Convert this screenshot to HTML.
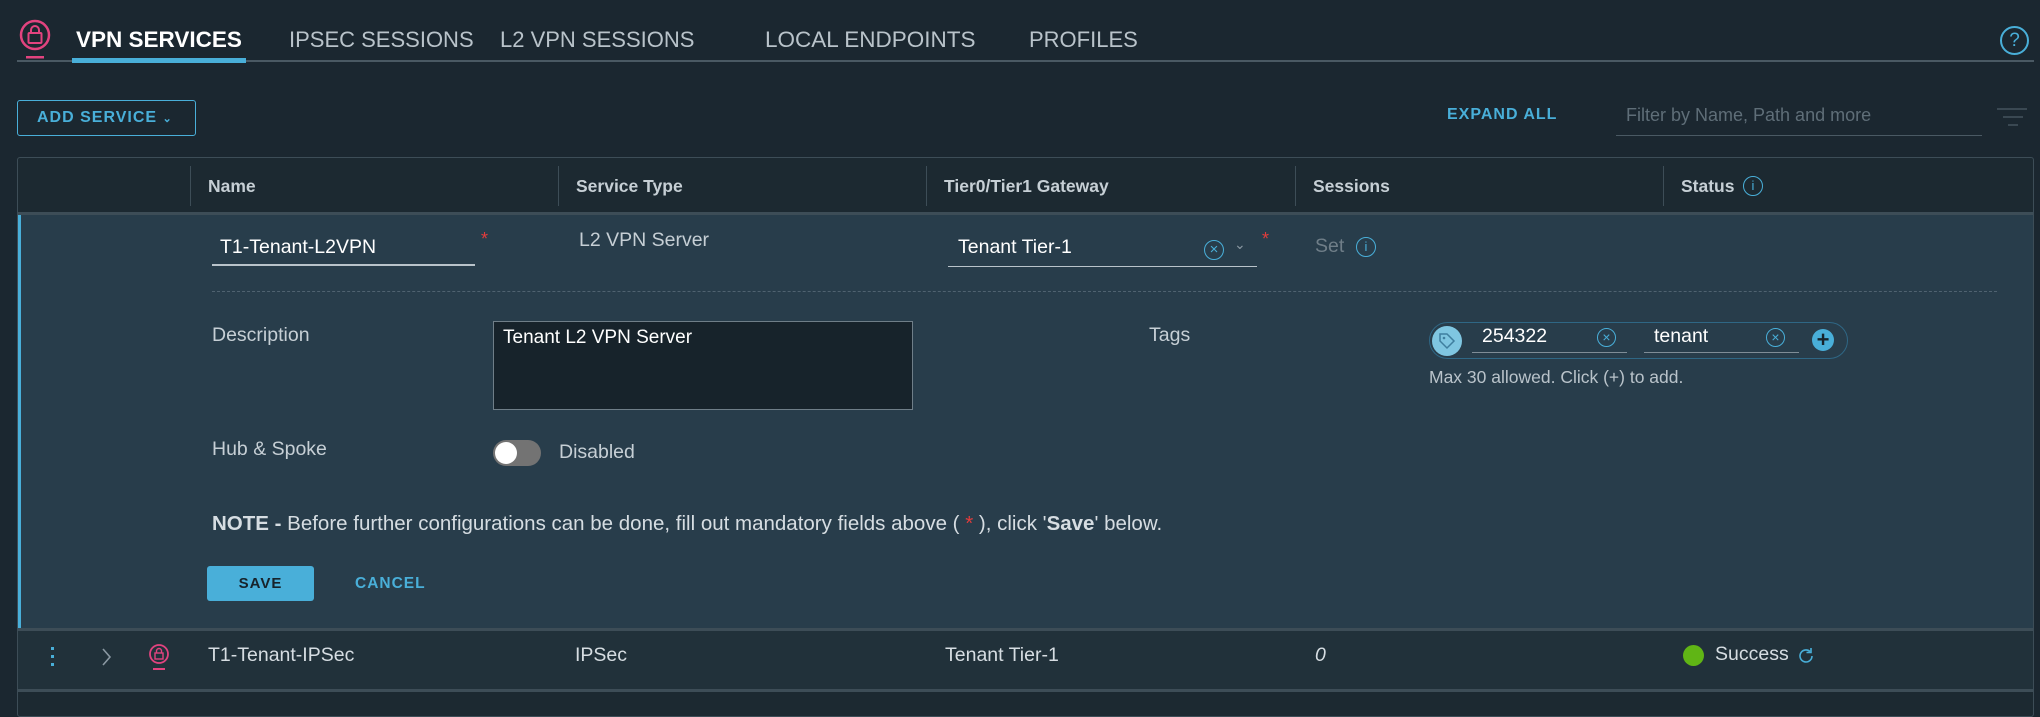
<!DOCTYPE html>
<html><head><meta charset="utf-8"><style>
*{box-sizing:border-box;margin:0;padding:0}
body{width:2040px;height:705px;background:#1b2730;font-family:"Liberation Sans",sans-serif;color:#d6dde2;position:relative;overflow:hidden}
.a{position:absolute;white-space:nowrap}
.tab{font-size:22px;color:#b9c3ca;top:27px}
.hd{font-size:17.5px;font-weight:bold;color:#c6cfd5;top:176px}
.t{font-size:19.5px}
.sep{position:absolute;top:166px;width:1px;height:40px;background:#3d4d57}
</style></head><body>
<svg class="a" style="left:18px;top:18px" width="34" height="44" viewBox="0 0 34 44"><circle cx="17" cy="17" r="14" fill="none" stroke="#e2437f" stroke-width="2.5"/><rect x="10.5" y="15" width="13" height="10" rx="1" fill="none" stroke="#e2437f" stroke-width="2"/><path d="M13 15v-3a4 4 0 0 1 8 0v3" fill="none" stroke="#e2437f" stroke-width="2"/><rect x="8" y="38" width="18" height="2.5" fill="#e2437f"/></svg>
<div class="a tab" style="left:76px;color:#fff;font-weight:bold;font-size:22.5px">VPN SERVICES</div>
<div class="a tab" style="left:289px">IPSEC SESSIONS</div>
<div class="a tab" style="left:500px">L2 VPN SESSIONS</div>
<div class="a tab" style="left:765px;font-size:22.5px">LOCAL ENDPOINTS</div>
<div class="a tab" style="left:1029px">PROFILES</div>
<div class="a" style="left:17px;top:60px;width:2017px;height:2px;background:#4a5963"></div>
<div class="a" style="left:72px;top:58px;width:174px;height:5px;background:#49afd9"></div>
<div class="a" style="left:2000px;top:26px;width:29px;height:29px;border:2px solid #49afd9;border-radius:50%;color:#49afd9;font-size:19px;text-align:center;line-height:25px">?</div>
<div class="a" style="left:17px;top:100px;width:179px;height:36px;border:1px solid #49afd9;border-radius:3px;color:#49afd9;font-size:16px;font-weight:bold;letter-spacing:1px;padding:8px 0 0 19px">ADD SERVICE <span style="font-size:11px">&#8964;</span></div>
<div class="a" style="left:1447px;top:106px;color:#49afd9;font-size:16px;font-weight:bold;letter-spacing:1px">EXPAND ALL</div>
<div class="a" style="left:1616px;top:105px;width:366px;height:31px;border-bottom:1px solid #4a5963;color:#5f6e78;font-size:18px;padding-left:10px">Filter by Name, Path and more</div>
<div class="a" style="left:1997px;top:108px;width:30px;height:2px;background:#3a4852"></div>
<div class="a" style="left:2003px;top:116px;width:20px;height:2px;background:#3a4852"></div>
<div class="a" style="left:2008px;top:124px;width:10px;height:2px;background:#3a4852"></div>
<div class="a" style="left:17px;top:157px;width:2017px;height:560px;border:1px solid #3d4d57;border-radius:3px;background:#1c2931"></div>
<div class="sep" style="left:190px"></div><div class="sep" style="left:558px"></div><div class="sep" style="left:926px"></div><div class="sep" style="left:1295px"></div><div class="sep" style="left:1663px"></div>
<div class="a hd" style="left:208px">Name</div>
<div class="a hd" style="left:576px">Service Type</div>
<div class="a hd" style="left:944px">Tier0/Tier1 Gateway</div>
<div class="a hd" style="left:1313px">Sessions</div>
<div class="a hd" style="left:1681px">Status</div>
<div class="a" style="left:1743px;top:176px;width:20px;height:20px;border:1.5px solid #49afd9;border-radius:50%;color:#49afd9;font-size:13px;text-align:center;line-height:17px">i</div>
<div class="a" style="left:18px;top:212px;width:2015px;height:3px;background:#3d4d57"></div>
<div class="a" style="left:18px;top:215px;width:2015px;height:413px;background:#283d4b;border-left:3px solid #49afd9"></div>
<div class="a t" style="left:212px;top:236px;width:263px;height:30px;border-bottom:2px solid #b9c3ca;color:#fff;padding-left:8px">T1-Tenant-L2VPN</div>
<div class="a" style="left:481px;top:229px;color:#e23c3c;font-size:18px">*</div>
<div class="a t" style="left:579px;top:229px;color:#c6cfd5">L2 VPN Server</div>
<div class="a t" style="left:948px;top:236px;width:309px;height:31px;border-bottom:1px solid #b9c3ca;color:#fff;padding-left:10px">Tenant Tier-1</div>
<div class="a" style="left:1204px;top:240px;width:20px;height:20px;border:1.5px solid #49afd9;border-radius:50%;color:#49afd9;font-size:15px;text-align:center;line-height:17px">×</div>
<div class="a" style="left:1234px;top:236px;color:#8a98a2;font-size:14px">&#8964;</div>
<div class="a" style="left:1262px;top:229px;color:#e23c3c;font-size:18px">*</div>
<div class="a t" style="left:1315px;top:235px;color:#6f7e88">Set</div>
<div class="a" style="left:1356px;top:237px;width:20px;height:20px;border:1.5px solid #49afd9;border-radius:50%;color:#49afd9;font-size:13px;text-align:center;line-height:17px">i</div>
<div class="a" style="left:212px;top:291px;width:1785px;border-top:1px dashed #4f6270"></div>
<div class="a t" style="left:212px;top:324px;color:#c6cfd5">Description</div>
<div class="a" style="left:493px;top:321px;width:420px;height:89px;background:#17232b;border:1px solid #6f7e88;color:#fff;padding:5px 9px;font-size:19px">Tenant L2 VPN Server</div>
<div class="a t" style="left:1149px;top:324px;color:#c6cfd5">Tags</div>
<div class="a" style="left:1429px;top:322px;width:419px;height:37px;border:1.5px solid #2f6785;border-radius:19px"></div>
<div class="a" style="left:1432px;top:326px;width:30px;height:30px;border-radius:50%;background:#7fc6e1"></div>
<svg class="a" style="left:1437px;top:331px" width="20" height="20" viewBox="0 0 20 20"><path d="M3 3h7l7 7-7 7-7-7z" fill="none" stroke="#3f7f9f" stroke-width="1.5"/><circle cx="7" cy="7" r="1.3" fill="#3f7f9f"/></svg>
<div class="a t" style="left:1472px;top:325px;width:155px;height:28px;border-bottom:1.5px solid #7f8d97;color:#fff;padding-left:10px">254322</div>
<div class="a" style="left:1597px;top:328px;width:19px;height:19px;border:1.5px solid #49afd9;border-radius:50%;color:#49afd9;font-size:14px;text-align:center;line-height:16px">×</div>
<div class="a t" style="left:1644px;top:325px;width:155px;height:28px;border-bottom:1.5px solid #7f8d97;color:#fff;padding-left:10px">tenant</div>
<div class="a" style="left:1766px;top:328px;width:19px;height:19px;border:1.5px solid #49afd9;border-radius:50%;color:#49afd9;font-size:14px;text-align:center;line-height:16px">×</div>
<div class="a" style="left:1812px;top:329px;width:22px;height:22px;border-radius:50%;background:#49afd9;color:#17232b;font-size:22px;font-weight:bold;text-align:center;line-height:22px">+</div>
<div class="a" style="left:1429px;top:367px;color:#b9c3ca;font-size:17.5px">Max 30 allowed. Click (+) to add.</div>
<div class="a t" style="left:212px;top:438px;color:#c6cfd5">Hub &amp; Spoke</div>
<div class="a" style="left:493px;top:440px;width:48px;height:26px;border-radius:13px;background:#737373"></div>
<div class="a" style="left:495px;top:442px;width:22px;height:22px;border-radius:50%;background:#fff"></div>
<div class="a t" style="left:559px;top:441px;color:#c6cfd5">Disabled</div>
<div class="a" style="left:212px;top:512px;color:#d6dde2;font-size:20.5px"><b>NOTE -</b> Before further configurations can be done, fill out mandatory fields above ( <span style="color:#e23c3c">*</span> ), click '<b>Save</b>' below.</div>
<div class="a" style="left:207px;top:566px;width:107px;height:35px;background:#49afd9;border-radius:3px;color:#17232b;font-size:15px;font-weight:bold;letter-spacing:1px;text-align:center;line-height:35px">SAVE</div>
<div class="a" style="left:355px;top:575px;color:#49afd9;font-size:15.5px;font-weight:bold;letter-spacing:1px">CANCEL</div>
<div class="a" style="left:18px;top:628px;width:2015px;height:3px;background:#3d4d57"></div>
<div class="a" style="left:18px;top:631px;width:2015px;height:58px;background:#21313a"></div>
<div class="a" style="left:18px;top:689px;width:2015px;height:3px;background:#3d4d57"></div>
<div class="a" style="left:51px;top:647px;width:3px;height:3px;background:#49afd9;box-shadow:0 8px 0 #49afd9,0 16px 0 #49afd9"></div>
<svg class="a" style="left:101px;top:647px" width="12" height="20" viewBox="0 0 12 20"><path d="M2 2l7 8-7 8" fill="none" stroke="#8a98a2" stroke-width="1.6"/></svg>
<svg class="a" style="left:148px;top:643px" width="22" height="30" viewBox="0 0 22 30"><circle cx="11" cy="11" r="9" fill="none" stroke="#e2437f" stroke-width="1.8"/><rect x="7" y="10" width="8" height="6" fill="none" stroke="#e2437f" stroke-width="1.4"/><path d="M8.5 10V8a2.5 2.5 0 0 1 5 0v2" fill="none" stroke="#e2437f" stroke-width="1.4"/><rect x="5" y="25" width="12" height="2" fill="#e2437f"/></svg>
<div class="a t" style="left:208px;top:644px;color:#d6dde2">T1-Tenant-IPSec</div>
<div class="a t" style="left:575px;top:644px;color:#d6dde2">IPSec</div>
<div class="a t" style="left:945px;top:644px;color:#d6dde2">Tenant Tier-1</div>
<div class="a t" style="left:1315px;top:644px;color:#d6dde2;font-style:italic">0</div>
<div class="a" style="left:1683px;top:645px;width:21px;height:21px;border-radius:50%;background:#60b515"></div>
<div class="a t" style="left:1715px;top:643px;color:#d6dde2">Success</div>
<svg class="a" style="left:1796px;top:646px" width="20" height="20" viewBox="0 0 20 20"><path d="M16 10a6 6 0 1 1-2-4.5" fill="none" stroke="#49afd9" stroke-width="1.6"/><path d="M15 2v4.5h-4.5" fill="none" stroke="#49afd9" stroke-width="1.6"/></svg>
</body></html>
